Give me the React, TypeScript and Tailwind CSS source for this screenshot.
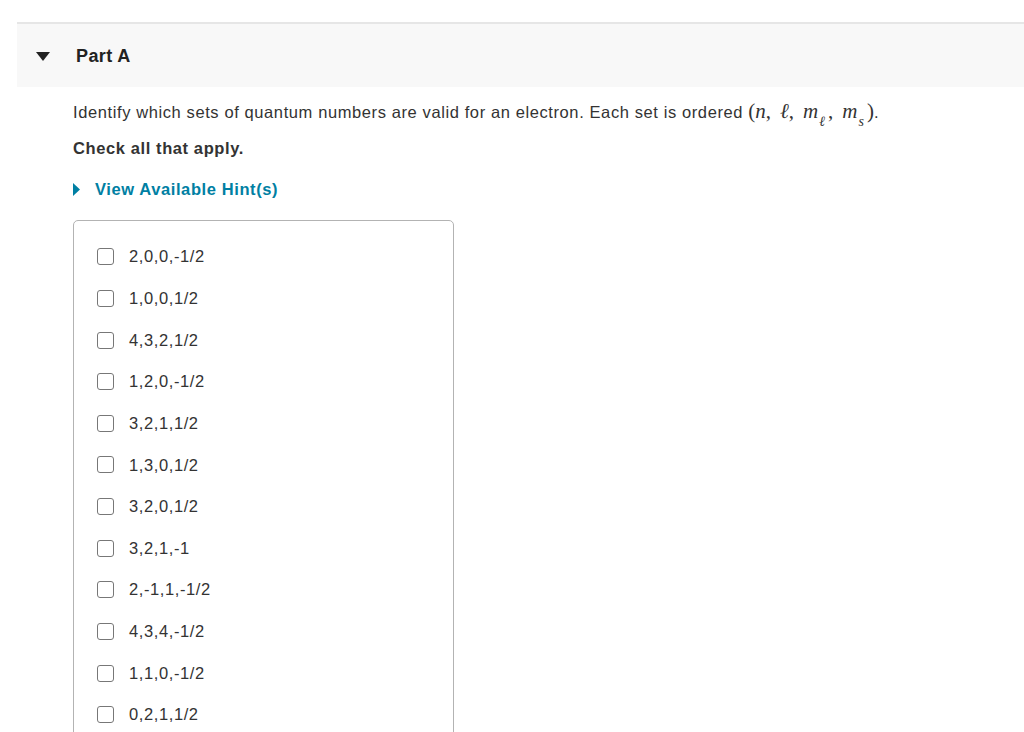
import React from 'react';

const choices = [
  '2,0,0,-1/2',
  '1,0,0,1/2',
  '4,3,2,1/2',
  '1,2,0,-1/2',
  '3,2,1,1/2',
  '1,3,0,1/2',
  '3,2,0,1/2',
  '3,2,1,-1',
  '2,-1,1,-1/2',
  '4,3,4,-1/2',
  '1,1,0,-1/2',
  '0,2,1,1/2',
];

const serif = "font-['Liberation_Serif','DejaVu_Serif',serif]";

function MathVar({ base, sub }: { base: string; sub?: string }) {
  return (
    <span className={`italic ${serif} text-[21px]`}>
      {base}
      {sub && <sub className="text-[14px] align-[-4px] ml-[1px] mr-[3px]">{sub}</sub>}
    </span>
  );
}

function Comma() {
  return <span className={`${serif} text-[21px] mr-[9px]`}>,</span>;
}

export default function App() {
  return (
    <div className="w-[1024px] h-[732px] overflow-hidden bg-white font-['Liberation_Sans',Arial,sans-serif] text-[#333]">
      <div className="h-[22px]" />
      {/* part header */}
      <div className="ml-[17px] h-[65px] border-t-2 border-[#e6e6e6] bg-[#f8f8f8] flex items-center">
        <svg width="14" height="9" viewBox="0 0 14 9" className="ml-[19px] mt-[1px]">
          <path d="M0 0h14L7 9z" fill="#222" />
        </svg>
        <span className="ml-[26px] mt-[1px] text-[18px] tracking-[0.4px] font-bold text-[#222]">Part A</span>
      </div>

      <div className="pl-[73px] text-[16.5px] tracking-[0.6px]">
        <p className="mt-[14px] leading-[20px] flex items-baseline">
          <span>Identify which sets of quantum numbers are valid for an electron. Each set is ordered&nbsp;</span>
          <span className="tracking-normal flex items-baseline">
            <span className={`${serif} text-[21px]`}>(</span>
            <MathVar base="n" />
            <Comma />
            <MathVar base="ℓ" />
            <Comma />
            <MathVar base="m" sub="ℓ" />
            <Comma />
            <MathVar base="m" sub="s" />
            <span className={`${serif} text-[21px]`}>)</span>
          </span>
          <span>.</span>
        </p>
        <p className="mt-[16px] leading-[20px] font-bold">Check all that apply.</p>
        <div className="mt-[21px] flex items-center text-[#007fa3] font-bold leading-[20px]">
          <svg width="7" height="13" viewBox="0 0 7 13" className="mr-[15px]">
            <path d="M0 0l7 6.5L0 13z" fill="#007fa3" />
          </svg>
          <span>View Available Hint(s)</span>
        </div>

        {/* answer options */}
        <div className="mt-[21px] w-[381px] h-[600px] border border-[#b3b3b3] rounded-[5px] pt-[15px]">
          {choices.map((c) => (
            <label key={c} className="h-[41.64px] flex items-center pl-[23px]">
              <span className="w-[17px] h-[17px] border border-[#777] rounded-[3px] bg-white" />
              <span className="ml-[15px] text-[#333]">{c}</span>
            </label>
          ))}
        </div>
      </div>
    </div>
  );
}
